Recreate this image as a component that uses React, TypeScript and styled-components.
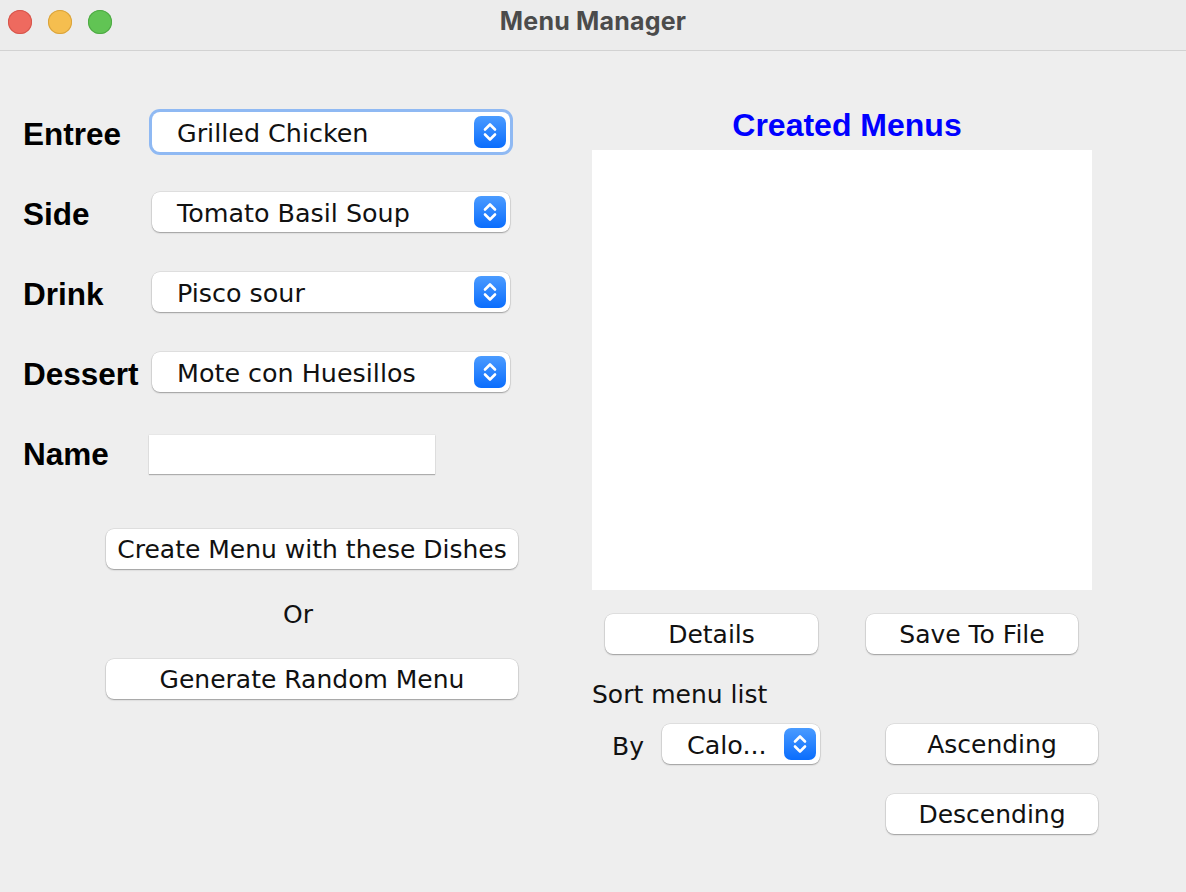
import styled, { createGlobalStyle } from 'styled-components'

const GlobalStyle = createGlobalStyle`
  html, body {
    margin: 0;
    padding: 0;
    background: #eeeeee;
  }
  * {
    box-sizing: border-box;
  }
`

const Window = styled.div`
  width: 1186px;
  height: 892px;
  background: #eeeeee;
  display: flex;
  flex-direction: column;
  overflow: hidden;
`

const TitleBar = styled.div`
  height: 51px;
  flex: none;
  background: #ececec;
  border-bottom: 1px solid #d2d2d2;
  position: relative;
  display: flex;
  align-items: center;
  justify-content: center;
`

const Lights = styled.div`
  position: absolute;
  left: 8px;
  top: 10px;
  display: flex;
  gap: 16px;
`

const Light = styled.span<{ $color: string; $edge: string }>`
  width: 24px;
  height: 24px;
  border-radius: 50%;
  background: ${p => p.$color};
  box-shadow: inset 0 0 0 1px ${p => p.$edge};
`

const WindowTitle = styled.h1`
  margin: 0 0 8px;
  font-family: Inter, 'Liberation Sans', sans-serif;
  font-weight: 700;
  font-size: 25px;
  color: #4b4b4b;
  letter-spacing: 0.2px;
`

const Content = styled.div`
  flex: 1;
  display: flex;
  padding-left: 23px;
`

const LeftColumn = styled.div`
  width: 569px;
  padding-top: 61px;
  display: flex;
  flex-direction: column;
`

const Form = styled.div`
  display: grid;
  grid-template-columns: 129px auto;
  grid-auto-rows: 40px;
  row-gap: 40px;
  align-items: center;
`

const FieldLabel = styled.label`
  font-family: 'Liberation Sans', Arial, sans-serif;
  font-weight: 700;
  font-size: 31.5px;
  color: #000;
  white-space: nowrap;
  padding-top: 4px;
`

const ComboBox = styled.div<{ $width: number; $focused?: boolean }>`
  width: ${p => p.$width}px;
  height: 40px;
  background: #fff;
  border-radius: 8px;
  display: flex;
  align-items: center;
  justify-content: space-between;
  padding: 0 4px 0 25px;
  font-family: 'DejaVu Sans', sans-serif;
  font-size: 25.4px;
  color: #111;
  box-shadow: ${p =>
    p.$focused
      ? '0 0 0 3px #8fb9f3, 0 1px 2px rgba(0,0,0,0.2)'
      : '0 0 0 0.5px rgba(0,0,0,0.12), 0 1px 1.5px rgba(0,0,0,0.3)'};
`

const ComboText = styled.span`
  padding-top: 2px;
  white-space: nowrap;
`

const ArrowBox = styled.span`
  width: 32px;
  height: 32px;
  border-radius: 7px;
  background: linear-gradient(#4a9bff, #0a6dfd);
  display: flex;
  align-items: center;
  justify-content: center;
  flex: none;
`

const TextField = styled.div`
  width: 286px;
  height: 39px;
  margin-left: -3px;
  margin-top: 5px;
  background: #fff;
  box-shadow: 0 1px 1px rgba(0, 0, 0, 0.25), 0 0 0 0.5px rgba(0, 0, 0, 0.06);
`

const Button = styled.button<{ $width: number }>`
  width: ${p => p.$width}px;
  height: 40px;
  border: none;
  border-radius: 8px;
  background: #fff;
  font-family: 'DejaVu Sans', sans-serif;
  font-size: 25px;
  color: #111;
  padding: 0;
  white-space: nowrap;
  box-shadow: 0 0 0 0.5px rgba(0, 0, 0, 0.12), 0 1px 1.5px rgba(0, 0, 0, 0.3);
`

const Actions = styled.div`
  margin-top: 57px;
  margin-left: 83px;
  display: flex;
  flex-direction: column;
  align-items: center;
  width: 412px;
`

const Plain = styled.span`
  font-family: 'DejaVu Sans', sans-serif;
  font-size: 25px;
  color: #111;
  line-height: 30px;
`

const OrText = styled(Plain)`
  margin: 31px 28px 29px 0;
`

const RightColumn = styled.div`
  width: 520px;
  padding-top: 55px;
  display: flex;
  flex-direction: column;
`

const ListTitle = styled.h2`
  margin: 0;
  width: 510px;
  height: 38px;
  line-height: 38px;
  text-align: center;
  font-family: 'Liberation Sans', Arial, sans-serif;
  font-weight: 700;
  font-size: 32px;
  color: #0000ff;
`

const MenuList = styled.div`
  margin-top: 6px;
  width: 500px;
  height: 440px;
  background: #fff;
`

const ButtonRow = styled.div`
  margin-top: 24px;
  padding-left: 13px;
  display: flex;
  gap: 48px;
`

const SortTitle = styled(Plain)`
  margin-top: 26px;
`

const SortRow = styled.div`
  margin-top: 13px;
  padding-left: 20px;
  display: flex;
  align-items: center;
`

const ByText = styled(Plain)`
  margin-right: 18px;
  margin-top: 6px;
`

const SortOrder = styled.div`
  margin-left: 66px;
  display: flex;
  flex-direction: column;
  padding-top: 1px;
`

const DescRow = styled.div`
  margin-top: 30px;
  padding-left: 294px;
`

function Chevrons() {
  return (
    <svg width="16" height="24" viewBox="0 0 16 24" fill="none">
      <path d="M3 9.5 L8 4.5 L13 9.5" stroke="#fff" strokeWidth="2.6" strokeLinecap="round" strokeLinejoin="round" />
      <path d="M3 14.5 L8 19.5 L13 14.5" stroke="#fff" strokeWidth="2.6" strokeLinecap="round" strokeLinejoin="round" />
    </svg>
  )
}

function Combo({ value, width, focused }: { value: string; width: number; focused?: boolean }) {
  return (
    <ComboBox $width={width} $focused={focused}>
      <ComboText>{value}</ComboText>
      <ArrowBox>
        <Chevrons />
      </ArrowBox>
    </ComboBox>
  )
}

const dishes = [
  { label: 'Entree', value: 'Grilled Chicken' },
  { label: 'Side', value: 'Tomato Basil Soup' },
  { label: 'Drink', value: 'Pisco sour' },
  { label: 'Dessert', value: 'Mote con Huesillos' },
]

export default function App() {
  return (
    <>
      <GlobalStyle />
      <Window>
        <TitleBar>
          <Lights>
            <Light $color="#ee6a5f" $edge="#d6564c" />
            <Light $color="#f5be4f" $edge="#d9a33c" />
            <Light $color="#61c454" $edge="#4ea944" />
          </Lights>
          <WindowTitle>Menu Manager</WindowTitle>
        </TitleBar>
        <Content>
          <LeftColumn>
            <Form>
              {dishes.map((d, i) => [
                <FieldLabel key={d.label}>{d.label}</FieldLabel>,
                <Combo key={d.value} value={d.value} width={358} focused={i === 0} />,
              ])}
              <FieldLabel>Name</FieldLabel>
              <TextField />
            </Form>
            <Actions>
              <Button $width={412}>Create Menu with these Dishes</Button>
              <OrText>Or</OrText>
              <Button $width={412}>Generate Random Menu</Button>
            </Actions>
          </LeftColumn>
          <RightColumn>
            <ListTitle>Created Menus</ListTitle>
            <MenuList />
            <ButtonRow>
              <Button $width={213}>Details</Button>
              <Button $width={212}>Save To File</Button>
            </ButtonRow>
            <SortTitle>Sort menu list</SortTitle>
            <SortRow>
              <ByText>By</ByText>
              <Combo value="Calo..." width={158} />
              <SortOrder>
                <Button $width={212}>Ascending</Button>
              </SortOrder>
            </SortRow>
            <DescRow>
              <Button $width={212}>Descending</Button>
            </DescRow>
          </RightColumn>
        </Content>
      </Window>
    </>
  )
}
